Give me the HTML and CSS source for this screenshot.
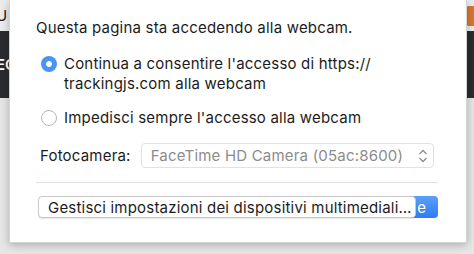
FILE: index.html
```html
<!DOCTYPE html>
<html lang="it">

<head>
    <meta charset="UTF-8">
    <title>Accesso webcam</title>
    <link rel="stylesheet" href="styles.css">
</head>

<body>
    <div class="backdrop">
        <div class="toolbar">
            <span class="toolbar-letter">U</span>
            <span class="toolbar-badge"></span>
        </div>
        <div class="dark-band">
            <span class="band-text">EC</span>
        </div>
        <div class="page-rest"></div>
    </div>

    <div class="dialog">
        <p class="dialog-title">Questa pagina sta accedendo alla webcam.</p>

        <label class="radio-row">
            <span class="radio checked"></span>
            <span class="radio-label">Continua a consentire l'accesso di https://<br>trackingjs.com alla webcam</span>
        </label>

        <label class="radio-row">
            <span class="radio"></span>
            <span class="radio-label">Impedisci sempre l'accesso alla webcam</span>
        </label>

        <div class="camera-row">
            <span class="camera-label">Fotocamera:</span>
            <div class="select-box">
                <span>FaceTime HD Camera (05ac:8600)</span>
                <svg class="chevrons" width="10" height="14" viewBox="0 0 10 14">
                    <path d="M1.5 5 L5 1.5 L8.5 5" fill="none" stroke="#8e8e8e" stroke-width="1.3"/>
                    <path d="M1.5 9 L5 12.5 L8.5 9" fill="none" stroke="#8e8e8e" stroke-width="1.3"/>
                </svg>
            </div>
        </div>

        <hr class="divider">

        <div class="button-row">
            <button class="manage-button">Gestisci impostazioni dei dispositivi multimediali…</button>
            <button class="done-button">Fine</button>
        </div>
    </div>
</body>

</html>
```

FILE: styles.css
```css
* {
    margin: 0;
    padding: 0;
    box-sizing: border-box;
}

body {
    width: 474px;
    height: 254px;
    overflow: hidden;
    position: relative;
    background-color: #e4e4e4;
    font-family: 'Inter', 'Helvetica Neue', sans-serif;
    color: #1c1c1c;
}

/* page behind the popup */
.backdrop {
    display: flex;
    flex-direction: column;
    height: 100%;
}

.toolbar {
    height: 31px;
    background-color: #ececec;
    display: flex;
    justify-content: space-between;
    align-items: center;
}

.toolbar-letter {
    font-size: 15px;
    margin-left: -4px;
    color: #222;
}

.toolbar-badge {
    width: 10px;
    height: 20px;
    margin-right: -2px;
    background-color: #d9772e;
    border-radius: 3px;
}

.dark-band {
    height: 67px;
    background-color: #2b2c2f;
    display: flex;
    align-items: center;
}

.band-text {
    color: #fff;
    font-size: 15px;
    font-weight: 600;
    margin-left: -4px;
}

.page-rest {
    flex: 1;
    background-color: #e6e6e6;
}

/* the popup */
.dialog {
    position: absolute;
    top: 0;
    left: 9px;
    width: 458px;
    height: 243px;
    background-color: #ffffff;
    border: 1px solid #d4d4d4;
    border-top: none;
    box-shadow: 0 2px 8px rgba(0, 0, 0, 0.25);
    padding: 18px 28px 0 26px;
    font-size: 15px;
    letter-spacing: 0.2px;
}

.dialog-title {
    line-height: 20px;
    margin-bottom: 16px;
}

.radio-row {
    display: flex;
    align-items: flex-start;
    gap: 7px;
    line-height: 20px;
    margin-bottom: 14px;
}

.radio {
    flex: none;
    width: 16px;
    height: 16px;
    margin: 2px 0 0 5px;
    border-radius: 50%;
    border: 1px solid #b5b5b5;
    background-color: #fff;
}

.radio.checked {
    border: none;
    background: radial-gradient(circle, #ffffff 0 2.6px, #4b93f5 3.2px);
}

.camera-row {
    display: flex;
    align-items: center;
    gap: 10px;
    margin: 15px 4px 14px 4px;
}

.select-box {
    flex: 1;
    height: 25px;
    border: 1px solid #e2e2e2;
    border-radius: 4px;
    display: flex;
    justify-content: space-between;
    align-items: center;
    padding: 0 5px 0 9px;
    color: #8c8c8c;
}

.divider {
    border: none;
    border-top: 1px solid #e0e0e0;
    margin: 0 0 13px 0;
}

.button-row {
    display: flex;
    position: relative;
    margin-left: 2px;
}

.manage-button {
    position: relative;
    z-index: 1;
    width: 378px;
    height: 22px;
    border: 1px solid #c9c9c9;
    border-radius: 4px;
    background-color: #fff;
    font-family: inherit;
    font-size: 15px;
    letter-spacing: 0.2px;
    color: #1c1c1c;
    text-align: left;
    padding-left: 9px;
    white-space: nowrap;
    overflow: hidden;
    box-shadow: 0 1px 1px rgba(0, 0, 0, 0.1);
}

.done-button {
    flex: 1;
    margin-left: -30px;
    height: 22px;
    border: none;
    border-radius: 4px;
    background: linear-gradient(#5aa0fb, #2f7bf3);
    color: #fff;
    font-family: inherit;
    font-size: 15px;
    text-align: right;
    padding-right: 9px;
    letter-spacing: 3px;
    overflow: hidden;
    white-space: nowrap;
}
```
